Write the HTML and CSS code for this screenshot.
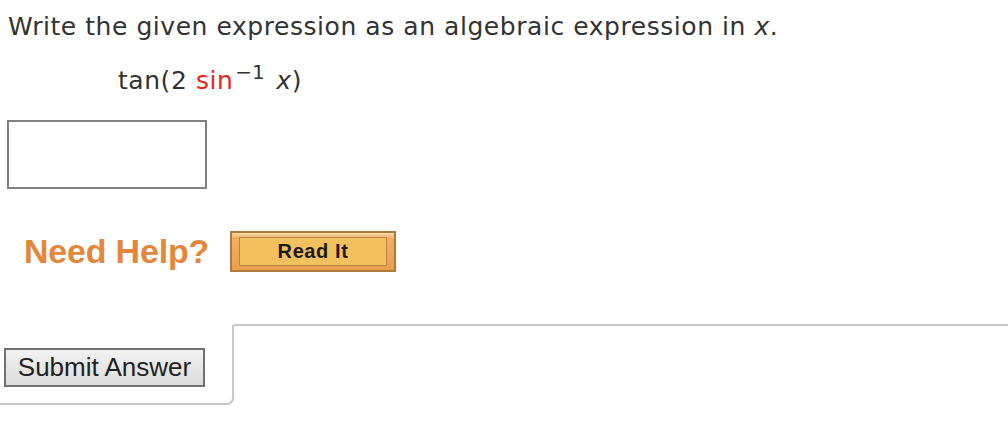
FILE: index.html
```html
<!DOCTYPE html>
<html>
<head>
<meta charset="utf-8">
<link rel="stylesheet" href="styles.css">
</head>
<body>
<div class="question">
  <p class="prompt">Write the given expression as an algebraic expression in <i>x</i>.</p>
  <div class="math">tan(2 <span class="fn">sin</span><sup>−1</sup> <i>x</i>)</div>
  <div class="answer-box"></div>
  <div class="help">
    <span class="help-label">Need Help?</span>
    <span class="read-it"><span class="read-inner">Read It</span></span>
  </div>
</div>
<div class="submit-area">
  <div class="submit-cell">
    <button class="submit-btn">Submit Answer</button>
  </div>
  <div class="submit-rest"></div>
</div>
</body>
</html>
```
FILE: styles.css
```css
html, body {
  margin: 0;
  padding: 0;
  background: #fff;
}
body {
  width: 1008px;
  height: 422px;
  overflow: hidden;
  font-family: "DejaVu Sans", Verdana, sans-serif;
  color: #333;
}
.question {
  padding-left: 8px;
}
.prompt {
  margin: 0;
  padding-top: 12px;
  font-size: 25px;
  line-height: 30px;
  letter-spacing: 0.55px;
  white-space: nowrap;
}
.prompt i, .math i {
  font-style: italic;
}
.math {
  margin-top: 24px;
  padding-left: 110px;
  font-size: 25px;
  line-height: 30px;
  height: 30px;
  letter-spacing: 0.55px;
  white-space: nowrap;
}
.fn {
  color: #e8261c;
}
.math sup {
  font-size: 20px;
  line-height: 0;
  letter-spacing: 0;
  margin-left: 2px;
  margin-right: 3px;
  vertical-align: baseline;
  position: relative;
  top: -10px;
}
.answer-box {
  margin-top: 24px;
  margin-left: -1px;
  width: 196px;
  height: 65px;
  border: 2px solid #808080;
}
.help {
  display: flex;
  align-items: center;
  margin-top: 42px;
  padding-left: 16px;
  gap: 21px;
}
.help-label {
  font-family: "Liberation Sans", Arial, sans-serif;
  font-weight: bold;
  font-size: 34px;
  color: #e3873a;
  letter-spacing: -0.2px;
  white-space: nowrap;
}
.read-it {
  display: block;
  width: 162px;
  height: 37px;
  border: 2px solid #b07a3a;
  background: linear-gradient(#f8dcb0 0, #f0b062 5px, #eaa04c 100%);
  padding: 0;
}
.read-inner {
  display: flex;
  align-items: center;
  justify-content: center;
  margin: 4px 7px;
  height: 27px;
  border: 1px solid #b88448;
  background: #f2c05c;
  font-family: "Liberation Sans", Arial, sans-serif;
  font-weight: bold;
  font-size: 20px;
  letter-spacing: 0.6px;
  color: #1a1a1a;
}
.submit-area {
  display: flex;
  margin-top: 53px;
}
.submit-cell {
  width: 228px;
  height: 55px;
  border-right: 2px solid #c8c8c8;
  border-bottom: 2px solid #c8c8c8;
  border-bottom-right-radius: 7px;
  padding-top: 23px;
  padding-left: 4px;
}
.submit-btn {
  display: block;
  width: 201px;
  height: 39px;
  margin: 0;
  border: 2px solid #717171;
  background: linear-gradient(#f2f2f2, #dcdcdc);
  font-family: "Liberation Sans", Arial, sans-serif;
  font-size: 26px;
  color: #222;
  padding: 0;
  white-space: nowrap;
}
.submit-rest {
  flex: 1;
  border-top: 2px solid #c8c8c8;
  margin-top: -1px;
}
```
